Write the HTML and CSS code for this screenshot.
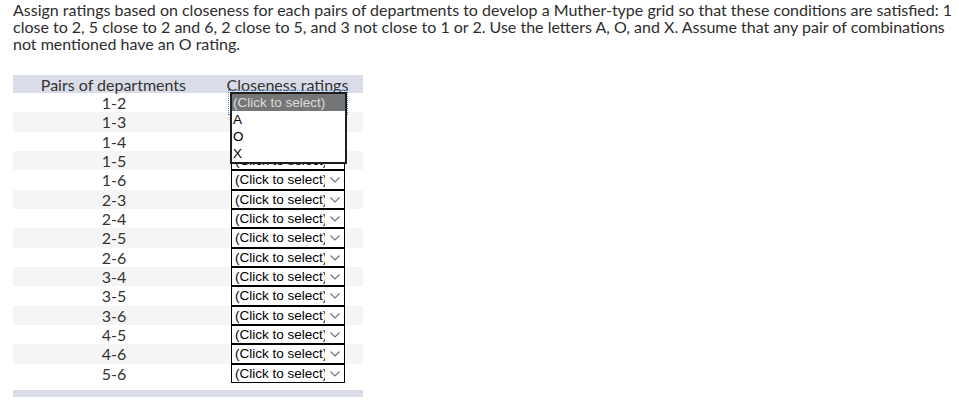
FILE: index.html
```html
<!DOCTYPE html>
<html>
<head>
<meta charset="utf-8">
<link rel="stylesheet" href="styles.css">
</head>
<body>
<div class="page">
  <p class="prompt">Assign ratings based on closeness for each pairs of departments to develop a Muther-type grid so that these conditions are satisfied: 1 close to 2, 5 close to 2 and 6, 2 close to 5, and 3 not close to 1 or 2. Use the letters A, O, and X. Assume that any pair of combinations not mentioned have an O rating.</p>
  <div class="ratings">
    <div class="row head"><div class="c1">Pairs of departments</div><div class="c2">Closeness ratings</div></div>
    <div class="row"><div class="c1">1-2</div><div class="c2"><div class="sel focused"><span class="txt">(Click to select)</span><svg class="chev" width="10" height="6" viewBox="0 0 10 6"><polyline points="0.5,0.5 5,5 9.5,0.5" fill="none" stroke="#707070" stroke-width="1.1"/></svg>
      <div class="popup">
        <div class="opt hl">(Click to select)</div>
        <div class="opt">A</div>
        <div class="opt">O</div>
        <div class="opt">X</div>
      </div></div></div></div>
    <div class="row alt"><div class="c1">1-3</div><div class="c2"><div class="sel"><span class="txt">(Click to select)</span><svg class="chev" width="10" height="6" viewBox="0 0 10 6"><polyline points="0.5,0.5 5,5 9.5,0.5" fill="none" stroke="#707070" stroke-width="1.1"/></svg></div></div></div>
    <div class="row"><div class="c1">1-4</div><div class="c2"><div class="sel"><span class="txt">(Click to select)</span><svg class="chev" width="10" height="6" viewBox="0 0 10 6"><polyline points="0.5,0.5 5,5 9.5,0.5" fill="none" stroke="#707070" stroke-width="1.1"/></svg></div></div></div>
    <div class="row alt"><div class="c1">1-5</div><div class="c2"><div class="sel"><span class="txt">(Click to select)</span><svg class="chev" width="10" height="6" viewBox="0 0 10 6"><polyline points="0.5,0.5 5,5 9.5,0.5" fill="none" stroke="#707070" stroke-width="1.1"/></svg></div></div></div>
    <div class="row"><div class="c1">1-6</div><div class="c2"><div class="sel"><span class="txt">(Click to select)</span><svg class="chev" width="10" height="6" viewBox="0 0 10 6"><polyline points="0.5,0.5 5,5 9.5,0.5" fill="none" stroke="#707070" stroke-width="1.1"/></svg></div></div></div>
    <div class="row alt"><div class="c1">2-3</div><div class="c2"><div class="sel"><span class="txt">(Click to select)</span><svg class="chev" width="10" height="6" viewBox="0 0 10 6"><polyline points="0.5,0.5 5,5 9.5,0.5" fill="none" stroke="#707070" stroke-width="1.1"/></svg></div></div></div>
    <div class="row"><div class="c1">2-4</div><div class="c2"><div class="sel"><span class="txt">(Click to select)</span><svg class="chev" width="10" height="6" viewBox="0 0 10 6"><polyline points="0.5,0.5 5,5 9.5,0.5" fill="none" stroke="#707070" stroke-width="1.1"/></svg></div></div></div>
    <div class="row alt"><div class="c1">2-5</div><div class="c2"><div class="sel"><span class="txt">(Click to select)</span><svg class="chev" width="10" height="6" viewBox="0 0 10 6"><polyline points="0.5,0.5 5,5 9.5,0.5" fill="none" stroke="#707070" stroke-width="1.1"/></svg></div></div></div>
    <div class="row"><div class="c1">2-6</div><div class="c2"><div class="sel"><span class="txt">(Click to select)</span><svg class="chev" width="10" height="6" viewBox="0 0 10 6"><polyline points="0.5,0.5 5,5 9.5,0.5" fill="none" stroke="#707070" stroke-width="1.1"/></svg></div></div></div>
    <div class="row alt"><div class="c1">3-4</div><div class="c2"><div class="sel"><span class="txt">(Click to select)</span><svg class="chev" width="10" height="6" viewBox="0 0 10 6"><polyline points="0.5,0.5 5,5 9.5,0.5" fill="none" stroke="#707070" stroke-width="1.1"/></svg></div></div></div>
    <div class="row"><div class="c1">3-5</div><div class="c2"><div class="sel"><span class="txt">(Click to select)</span><svg class="chev" width="10" height="6" viewBox="0 0 10 6"><polyline points="0.5,0.5 5,5 9.5,0.5" fill="none" stroke="#707070" stroke-width="1.1"/></svg></div></div></div>
    <div class="row alt"><div class="c1">3-6</div><div class="c2"><div class="sel"><span class="txt">(Click to select)</span><svg class="chev" width="10" height="6" viewBox="0 0 10 6"><polyline points="0.5,0.5 5,5 9.5,0.5" fill="none" stroke="#707070" stroke-width="1.1"/></svg></div></div></div>
    <div class="row"><div class="c1">4-5</div><div class="c2"><div class="sel"><span class="txt">(Click to select)</span><svg class="chev" width="10" height="6" viewBox="0 0 10 6"><polyline points="0.5,0.5 5,5 9.5,0.5" fill="none" stroke="#707070" stroke-width="1.1"/></svg></div></div></div>
    <div class="row alt"><div class="c1">4-6</div><div class="c2"><div class="sel"><span class="txt">(Click to select)</span><svg class="chev" width="10" height="6" viewBox="0 0 10 6"><polyline points="0.5,0.5 5,5 9.5,0.5" fill="none" stroke="#707070" stroke-width="1.1"/></svg></div></div></div>
    <div class="row"><div class="c1">5-6</div><div class="c2"><div class="sel"><span class="txt">(Click to select)</span><svg class="chev" width="10" height="6" viewBox="0 0 10 6"><polyline points="0.5,0.5 5,5 9.5,0.5" fill="none" stroke="#707070" stroke-width="1.1"/></svg></div></div></div>
    <div class="foot"></div>
  </div>
</div>
</body>
</html>
```
FILE: styles.css
```css
html, body {
  margin: 0;
  padding: 0;
  background: #ffffff;
}
.page {
  padding: 1px 0 0 13px;
  font-family: Lato, "Liberation Sans", sans-serif;
  color: #2d2d2d;
}
.prompt {
  margin: 0;
  width: 944px;
  font-size: 16px;
  line-height: 17px;
}
.ratings {
  margin-top: 23px;
  width: 350px;
  display: flex;
  flex-direction: column;
}
.row {
  display: flex;
  height: 19.33px;
  align-items: center;
  font-size: 16px;
  color: #333333;
}
.row.head {
  height: 18px;
  background: #dadde8;
}
.row.alt {
  background: #f5f5f5;
}
.c1 {
  width: 202px;
  text-align: center;
}
.c2 {
  width: 148px;
  display: flex;
  justify-content: center;
}
.row.head .c2 {
  padding-right: 2px;
}
.sel {
  position: relative;
  box-sizing: border-box;
  width: 114px;
  height: 19.33px;
  margin-right: 2px;
  border: 1px solid #000000;
  background: #ffffff;
  display: flex;
  align-items: center;
  font-family: "Liberation Sans", Arial, sans-serif;
  font-size: 13.5px;
  color: #000000;
}
.txt {
  width: 90px;
  flex: none;
  overflow: hidden;
  white-space: nowrap;
  padding-left: 3px;
}
.chev {
  flex: none;
  margin: 1px 4px 0 5px;
}
.focused {
  z-index: 10;
  outline: 1px dotted #4a8fd6;
  outline-offset: 2px;
}
.popup {
  position: absolute;
  left: -2px;
  top: -2px;
  width: 117px;
  box-sizing: border-box;
  border: 2px solid #1e1e1e;
  background: #ffffff;
}
.opt {
  height: 17px;
  line-height: 17px;
  padding-left: 1px;
  white-space: nowrap;
}
.opt.hl {
  background: #767676;
  color: #dcdcdc;
}
.foot {
  margin-top: 7px;
  height: 7px;
  background: #dadde8;
}
```
